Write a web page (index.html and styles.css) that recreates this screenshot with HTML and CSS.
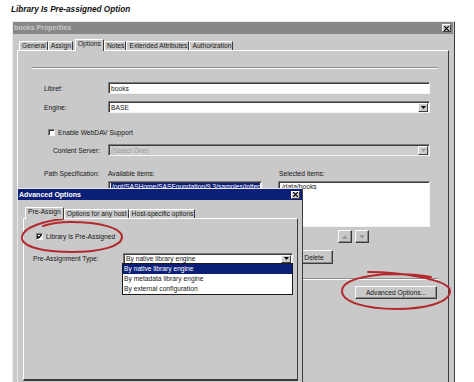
FILE: index.html
```html
<!DOCTYPE html>
<html>
<head>
<meta charset="utf-8">
<title>Library Is Pre-assigned Option</title>
<link rel="stylesheet" href="styles.css">
</head>
<body>
<div class="page">
  <h1 class="caption">Library Is Pre-assigned Option</h1>

  <div class="window">
    <div class="titlebar">
      <span class="title">books Properties</span>
      <span class="close"><svg width="5" height="5" viewBox="0 0 5 5"><path d="M0 0L5 5M5 0L0 5" stroke="#000" stroke-width="1.2"/></svg></span>
    </div>
    <div class="tabs main-tabs">
      <span class="tab">General</span>
      <span class="tab">Assign</span>
      <span class="tab active">Options</span>
      <span class="tab">Notes</span>
      <span class="tab">Extended Attributes</span>
      <span class="tab">Authorization</span>
    </div>
    <div class="panel main-panel">
      <div class="sep sep-top"></div>

      <div class="row r-libref">
        <span class="lbl lbl-main">Libref:</span>
        <div class="field">books</div>
      </div>

      <div class="row r-engine">
        <span class="lbl lbl-main">Engine:</span>
        <div class="field select">
          <span class="val">BASE</span>
          <span class="drop"><svg width="5" height="3" viewBox="0 0 5 3"><path d="M0 0H5L2.5 3Z" fill="#000"/></svg></span>
        </div>
      </div>

      <div class="row r-webdav">
        <span class="check"></span>
        <span class="check-text">Enable WebDAV Support</span>
      </div>

      <div class="row r-content">
        <span class="lbl lbl-content">Content Server:</span>
        <div class="field select disabled">
          <span class="val">(Select One)</span>
          <span class="drop"><svg width="5" height="3" viewBox="0 0 5 3"><path d="M0 0H5L2.5 3Z" fill="#9a9a9a"/></svg></span>
        </div>
      </div>

      <div class="row r-path">
        <span class="lbl lbl-main">Path Specification:</span>
        <span class="lbl lbl-avail">Available items:</span>
        <span class="lbl">Selected items:</span>
      </div>

      <div class="row r-lists">
        <div class="list list-avail">
          <div class="item sel">/opt/SASHome/SASFoundation/9.3/samples/inttech</div>
        </div>
        <div class="list list-selected">
          <div class="item">/data/books</div>
        </div>
      </div>

      <div class="row r-updown">
        <span class="btn arrow-btn up"><svg width="6" height="4" viewBox="0 0 6 4"><path d="M0 4H6L3 0Z" fill="#9c9c9c"/></svg></span>
        <span class="btn arrow-btn down"><svg width="6" height="4" viewBox="0 0 6 4"><path d="M0 0H6L3 4Z" fill="#9c9c9c"/></svg></span>
      </div>

      <div class="row r-delete">
        <span class="btn btn-add">Add</span>
        <span class="btn btn-delete">Delete</span>
      </div>

      <div class="sep sep-bottom"></div>

      <div class="row r-adv">
        <span class="btn btn-adv">Advanced Options...</span>
      </div>
    </div>
  </div>

  <div class="dialog">
    <div class="titlebar dlg-titlebar">
      <span class="title dlg-title">Advanced Options</span>
      <span class="close"><svg width="5" height="5" viewBox="0 0 5 5"><path d="M0 0L5 5M5 0L0 5" stroke="#000" stroke-width="1.2"/></svg></span>
    </div>
    <div class="tabs dlg-tabs">
      <span class="tab active">Pre-Assign</span>
      <span class="tab">Options for any host</span>
      <span class="tab">Host-specific options</span>
    </div>
    <div class="panel dlg-panel">
      <div class="row d-check">
        <span class="check checked"><svg width="5" height="5" viewBox="0 0 5 5"><path d="M0.3 2.3L1.8 3.8L4.7 0.6" fill="none" stroke="#000" stroke-width="1.3"/></svg></span>
        <span class="check-text">Library is Pre-Assigned</span>
      </div>
      <div class="row d-type">
        <span class="lbl lbl-type">Pre-Assignment Type:</span>
        <div class="combo">
          <div class="field select dlg-select">
            <span class="val">By native library engine</span>
            <span class="drop"><svg width="5" height="3" viewBox="0 0 5 3"><path d="M0 0H5L2.5 3Z" fill="#000"/></svg></span>
          </div>
          <div class="dropdown">
            <div class="opt sel">By native library engine</div>
            <div class="opt">By metadata library engine</div>
            <div class="opt">By external configuration</div>
          </div>
        </div>
      </div>
    </div>
  </div>

  <svg class="marks" width="474" height="382" viewBox="0 0 474 382">
    <path d="M63 219 C45 221 23 227 22 237 C21 247 44 252 72 252 C101 252 122 246 122 237 C122 228 100 222 70 222 C58 222 49 224 43 226" fill="none" stroke="#b32a2e" stroke-width="2" stroke-linecap="round"/>
    <path d="M368 272 C398 272 450 279 450 291 C450 303 424 309 396 309 C366 309 342 302 342 291 C342 281 362 275 392 274 C408 274 421 275 431 277" fill="none" stroke="#b32a2e" stroke-width="2" stroke-linecap="round"/>
  </svg>
</div>
</body>
</html>
```

FILE: styles.css
```css
* { box-sizing: border-box; }

html, body {
  margin: 0;
  background: #fff;
}

body {
  font-family: "Liberation Sans", Arial, sans-serif;
  font-size: 6.7px;
  color: #161616;
}

.page {
  position: relative;
  width: 474px;
  height: 382px;
  overflow: hidden;
}

.caption {
  margin: 0;
  height: 21px;
  padding: 5px 0 0 11px;
  font-size: 8.2px;
  line-height: 10px;
  font-weight: bold;
  font-style: italic;
  color: #111;
}

/* ---------- main properties window ---------- */
.window {
  margin-left: 12px;
  width: 443px;
  height: 400px;
  padding-right: 1px;
  background: #c9c9c9;
  border-left: 1px solid #ececec;
  border-top: 1px solid #ececec;
  border-right: 1px solid #3c3c3c;
}

.titlebar {
  height: 12px;
  display: flex;
  align-items: center;
  justify-content: space-between;
  padding: 0 2px 0 1px;
  background: #878787;
}

.title {
  color: #c8c8c8;
  font-weight: bold;
  font-size: 7px;
  line-height: 10px;
}

.close {
  width: 9px;
  height: 8px;
  display: flex;
  align-items: center;
  justify-content: center;
  background: #cdcdcd;
  border: 1px solid;
  border-color: #fff #404040 #404040 #fff;
}

.tabs {
  display: flex;
  align-items: flex-end;
}

.main-tabs {
  height: 16px;
  padding-left: 6px;
}

.tab {
  height: 9px;
  padding: 0 1px 0 2px;
  line-height: 8px;
  white-space: nowrap;
  border-top: 1px solid #fff;
  border-left: 1px solid #fff;
  border-right: 1px solid #3c3c3c;
  background: #c9c9c9;
}

.tab.active {
  position: relative;
  z-index: 1;
  height: 12px;
  margin: 0 0 -1px 2px;
  padding: 0 2px 2px 2px;
  line-height: 8px;
}

.panel {
  background: #c9c9c9;
  border-top: 1px solid #fff;
  border-left: 1px solid #fff;
  border-right: 1px solid #3c3c3c;
}

.main-panel {
  margin-left: 4px;
  width: 432px;
  height: 340px;
}

.sep {
  height: 2px;
  border-top: 1px solid #8e8e8e;
  border-bottom: 1px solid #fafafa;
}

.sep-top {
  margin: 16px 0 0 14px;
  width: 406px;
}

.sep-bottom {
  margin: 14px 0 0 14px;
  width: 406px;
}

.row {
  display: flex;
  align-items: center;
  height: 12px;
}

.lbl {
  white-space: nowrap;
}

.lbl-main {
  width: 90px;
  padding-left: 26px;
}

.field {
  width: 322px;
  height: 12px;
  display: flex;
  align-items: center;
  padding-left: 2px;
  background: #fff;
  border: 1px solid;
  border-color: #7c7c7c #f4f4f4 #f4f4f4 #7c7c7c;
  box-shadow: inset 1px 1px 0 #3a3a3a;
  white-space: nowrap;
}

.select {
  justify-content: space-between;
  padding-right: 1px;
}

.drop {
  width: 10px;
  height: 9px;
  display: flex;
  align-items: center;
  justify-content: center;
  background: #cdcdcd;
  border: 1px solid;
  border-color: #fff #404040 #404040 #fff;
}

.select.disabled {
  background: #cecece;
  color: #9a9a9a;
}

.r-libref { margin-top: 13px; }
.r-engine { margin-top: 7px; }

.r-webdav {
  margin-top: 13px;
  padding-left: 30px;
}

.check {
  width: 7px;
  height: 7px;
  display: flex;
  align-items: center;
  justify-content: center;
  background: #fff;
  border: 1px solid;
  border-color: #7a7a7a #f0f0f0 #f0f0f0 #7a7a7a;
  box-shadow: inset 1px 1px 0 #3a3a3a;
}

.check-text {
  margin-left: 3px;
  white-space: nowrap;
}

.r-content { margin-top: 6px; }

.lbl-content {
  width: 90px;
  padding-left: 35px;
}

.r-path {
  margin-top: 12px;
  height: 10px;
}

.lbl-avail {
  width: 171px;
}

.r-lists {
  margin-top: 3px;
  height: 46px;
  align-items: stretch;
}

.list {
  background: #fff;
  border: 1px solid;
  border-color: #7c7c7c #f4f4f4 #f4f4f4 #7c7c7c;
  box-shadow: inset 1px 1px 0 #3a3a3a;
  overflow: hidden;
  padding: 1px 1px 0 2px;
}

.list-avail {
  margin-left: 90px;
  width: 154px;
}

.list-selected {
  margin-left: 16px;
  width: 152px;
}

.item {
  height: 8px;
  line-height: 8px;
  white-space: nowrap;
  padding-left: 1px;
}

.item.sel {
  background: #0c1f78;
  color: #fff;
}

.btn {
  display: flex;
  align-items: center;
  justify-content: center;
  white-space: nowrap;
  background: #c9c9c9;
  border: 1px solid;
  border-color: #fbfbfb #3c3c3c #3c3c3c #fbfbfb;
  box-shadow: inset -1px -1px 0 #8a8a8a;
}

.r-updown {
  margin-top: 3px;
  height: 13px;
}

.arrow-btn {
  width: 14px;
  height: 13px;
}

.up { margin-left: 320px; }
.down { margin-left: 3px; }

.r-delete {
  margin-top: 7px;
  height: 14px;
}

.btn-add {
  margin-left: 236px;
  width: 38px;
  height: 14px;
}

.btn-delete {
  margin-left: 3px;
  width: 38px;
  height: 14px;
}

.r-adv {
  margin-top: 6px;
  height: 13px;
  justify-content: flex-end;
  padding-right: 11px;
}

.btn-adv {
  width: 82px;
  height: 13px;
}

/* ---------- advanced options dialog (floats over the window) ---------- */
.dialog {
  position: absolute;
  left: 17px;
  top: 188px;
  width: 286px;
  height: 200px;
  background: #c9c9c9;
  border-left: 1px solid #e8e8e8;
  border-top: 1px solid #e8e8e8;
  border-right: 1px solid #3c3c3c;
}

.dlg-titlebar {
  height: 11px;
  background: #0b1f78;
}

.dlg-title {
  color: #fff;
}

.dlg-tabs {
  height: 18px;
  padding-left: 5px;
}

.dlg-panel {
  margin-left: 5px;
  width: 275px;
  height: 163px;
  border-bottom: 2px solid #3a3a3a;
}

.d-check {
  margin-top: 11px;
  padding-left: 12px;
}

.d-type {
  margin-top: 11px;
  height: 11px;
}

.lbl-type {
  width: 99px;
  padding-left: 9px;
}

.combo {
  position: relative;
}

.dlg-select {
  width: 170px;
  height: 11px;
}

.dlg-select .drop {
  height: 8px;
}

.dropdown {
  position: absolute;
  left: -1px;
  top: 10px;
  width: 171px;
  background: #fff;
  border: 1px solid #1a1a1a;
}

.opt {
  height: 10px;
  line-height: 10px;
  padding-left: 1px;
  white-space: nowrap;
}

.opt.sel {
  background: #0c1f78;
  color: #fff;
}

/* ---------- red hand-drawn annotations ---------- */
.marks {
  position: absolute;
  left: 0;
  top: 0;
  pointer-events: none;
}
```
